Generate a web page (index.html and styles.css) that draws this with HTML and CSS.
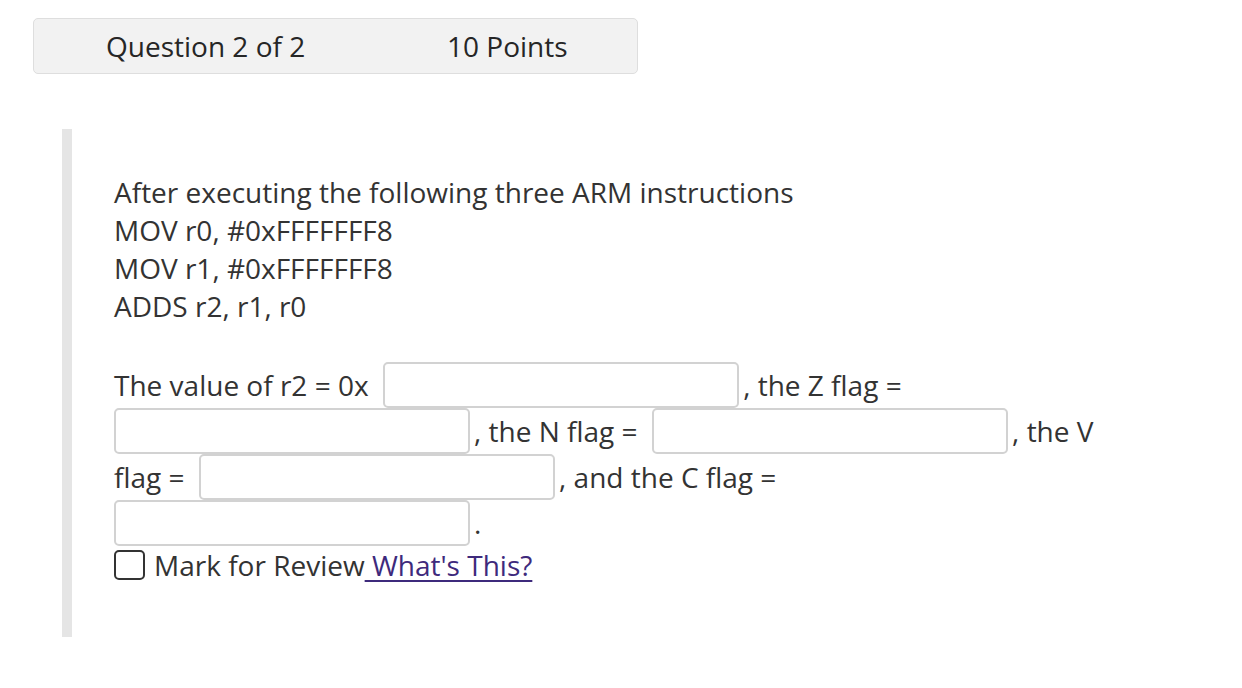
FILE: index.html
```html
<!DOCTYPE html>
<html>
<head>
<meta charset="utf-8">
<link rel="stylesheet" href="styles.css">
</head>
<body>
<div class="header">
  <span class="q-num">Question 2 of 2</span>
  <span class="q-pts">10 Points</span>
</div>
<div class="question">
  <div class="content">
    <p class="stem">After executing the following three ARM instructions<br>MOV r0, #0xFFFFFFF8<br>MOV r1, #0xFFFFFFF8<br>ADDS r2, r1, r0</p>
    <p class="answers">The value of r2 = 0x&nbsp; <span class="field"></span>, the Z flag =&nbsp; <span class="field"></span>, the N flag =&nbsp; <span class="field"></span>, the V flag =&nbsp; <span class="field"></span>, and the C flag =&nbsp; <span class="field"></span>.</p>
    <div class="review">
      <span class="check"></span>
      <span class="label">Mark for Review</span><a class="link" href="#">&nbsp;What's This?</a>
    </div>
  </div>
</div>
</body>
</html>
```
FILE: styles.css
```css
html, body {
  margin: 0;
  padding: 0;
  background: #ffffff;
}
body {
  font-family: "Open Sans", "Noto Sans", sans-serif;
  color: #333333;
}
.header {
  margin: 18px 0 0 33px;
  width: 603px;
  height: 53px;
  box-sizing: content-box;
  border: 1px solid #dedede;
  border-radius: 5px;
  background: #f2f2f2;
  display: flex;
  align-items: center;
  padding-bottom: 1px;
  font-size: 28px;
  color: #262626;
}
.q-num {
  margin-left: 72px;
  width: 341px;
}
.question {
  margin: 55px 0 0 62px;
  border-left: 10px solid #e5e5e5;
  width: 1060px;
  padding: 44px 0 52px 42px;
  box-sizing: border-box;
}
.content {
  width: 1000px;
  font-size: 28px;
  line-height: 38px;
}
.stem {
  margin: 0;
}
.answers {
  margin: 37px 0 0 0;
  line-height: 46px;
}
.field {
  display: inline-block;
  width: 356px;
  height: 46px;
  box-sizing: border-box;
  border: 2px solid #d2d2d2;
  border-radius: 5px;
  background: #fff;
  vertical-align: top;
  margin: 0 4px 0 0;
}
.review {
  display: flex;
  align-items: center;
  height: 40px;
  margin-top: -1px;
}
.check {
  width: 31px;
  height: 30px;
  box-sizing: border-box;
  border: 2px solid #333;
  border-radius: 5px;
  margin-right: 9px;
}
.link {
  color: #3e2a7c;
  text-decoration: underline;
  text-decoration-thickness: 2px;
  text-underline-offset: 4px;
}
```
